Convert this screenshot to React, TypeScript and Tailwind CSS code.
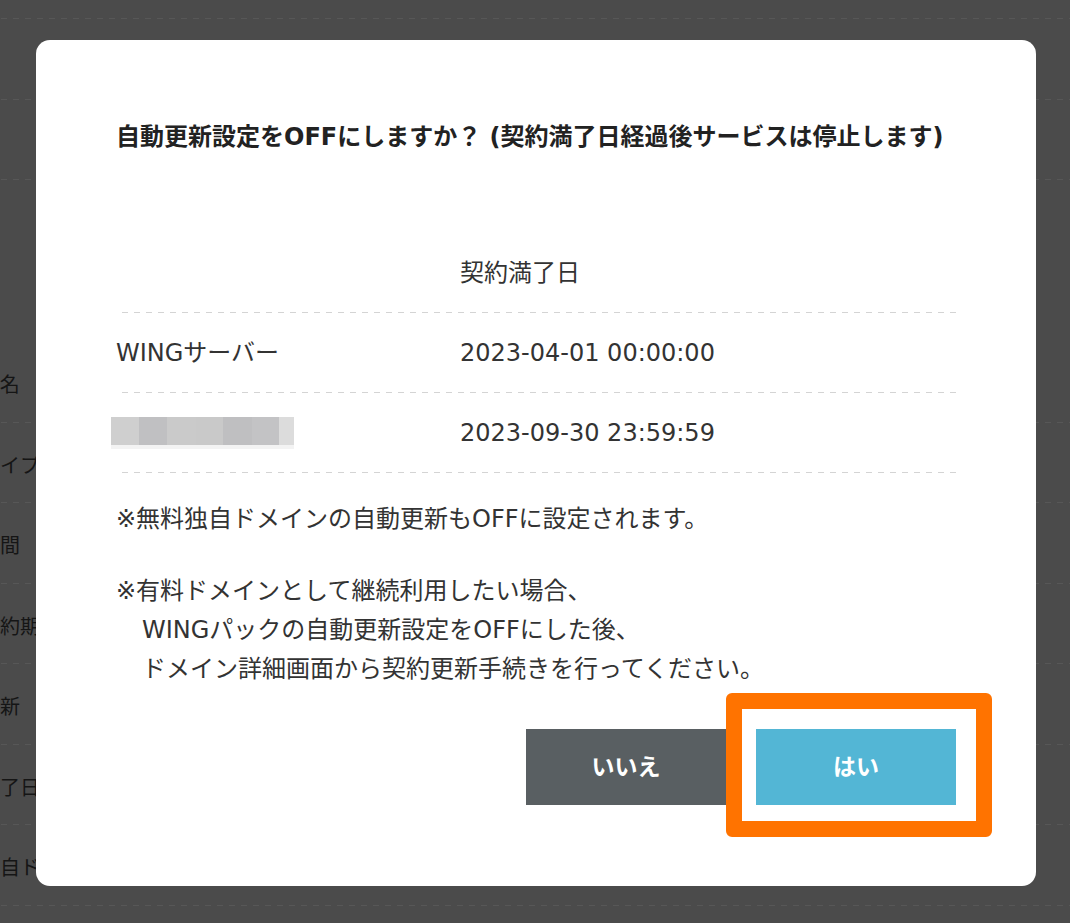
import React from "react";

const dash =
  "bg-[linear-gradient(to_right,#d4d4d4_50%,transparent_50%)] bg-[length:12px_1px] bg-repeat-x bg-bottom";
const bgDash =
  "bg-[linear-gradient(to_right,#575757_50%,transparent_50%)] bg-[length:12px_1px] bg-repeat-x bg-bottom";

const bgRows = [
  { label: "サーバー名", cls: "-ml-[80px]" },
  { label: "契約タイプ", cls: "-ml-[60px]" },
  { label: "利用期間", cls: "-ml-[60px]" },
  { label: "契約期間", cls: "-ml-[20px]" },
  { label: "自動更新", cls: "-ml-[60px]" },
  { label: "契約満了日", cls: "-ml-[60px]" },
  { label: "独自ドメイン", cls: "-ml-[20px]" },
];

const mosaic = [
  { w: "w-[28px]", c: "bg-[#cfcfcf]" },
  { w: "w-[28px]", c: "bg-[#c0c0c2]" },
  { w: "w-[29px]", c: "bg-[#cacaca]" },
  { w: "w-[27px]", c: "bg-[#c9c9c9]" },
  { w: "w-[29px]", c: "bg-[#bfbfc1]" },
  { w: "w-[27px]", c: "bg-[#c3c3c5]" },
  { w: "w-[15px]", c: "bg-[#dcdcdc]" },
];

export default function App() {
  return (
    <div
      className="relative w-full h-[923px] overflow-hidden bg-[#4b4b4b]"
      style={{ fontFamily: '"DejaVu Sans", "Noto Sans CJK JP", sans-serif' }}
    >
      {/* dimmed page behind the dialog */}
      <div className="flex flex-col">
        <div className={`h-[19px] ${bgDash}`} />
        <div className={`h-[81px] ${bgDash}`} />
        <div className={`h-[80px] ${bgDash}`} />
        <div className="h-[162px]" />
        {bgRows.map((r) => (
          <div
            key={r.label}
            className={`h-[80.5px] flex items-center ${bgDash}`}
          >
            <span
              className={`${r.cls} text-[20px] leading-none text-[#151515] whitespace-nowrap pt-[6px]`}
            >
              {r.label}
            </span>
          </div>
        ))}
      </div>

      {/* dialog */}
      <div className="absolute left-[36px] top-[40px] w-[1000px] h-[846px] bg-white rounded-[14px] px-[80px] pt-[80px] flex flex-col">
        <h2 className="text-[24px] leading-[34px] font-bold text-[#222] whitespace-nowrap">
          自動更新設定をOFFにしますか？ (契約満了日経過後サービスは停止します)
        </h2>

        <div className="mt-[79px] flex flex-col text-[24px] text-[#333]">
          <div className={`h-[80px] flex items-center ${dash}`}>
            <div className="w-[344px]" />
            <div>契約満了日</div>
          </div>
          <div className={`h-[80px] flex items-center ${dash}`}>
            <div className="w-[344px]">WINGサーバー</div>
            <div>2023-04-01 00:00:00</div>
          </div>
          <div className={`h-[80px] flex items-center ${dash}`}>
            <div className="w-[344px]">
              <div className="-ml-[5px] flex flex-col">
                <div className="flex h-[28px]">
                  {mosaic.map((m, i) => (
                    <div key={i} className={`${m.w} ${m.c} h-full`} />
                  ))}
                </div>
                <div className="h-[4px] w-[183px] bg-[#f3f3f3]" />
              </div>
            </div>
            <div>2023-09-30 23:59:59</div>
          </div>
        </div>

        <div className="mt-[27px] text-[24px] leading-[39px] text-[#333] whitespace-nowrap">
          <p>※無料独自ドメインの自動更新もOFFに設定されます。</p>
          <div className="mt-[33px]">
            <p>※有料ドメインとして継続利用したい場合、</p>
            <p className="pl-[26px]">WINGパックの自動更新設定をOFFにした後、</p>
            <p className="pl-[26px]">ドメイン詳細画面から契約更新手続きを行ってください。</p>
          </div>
        </div>

        <div className="mt-[40px] flex justify-end gap-[30px]">
          <button className="w-[200px] h-[76px] bg-[#595f62] text-white text-[23px] font-bold">
            いいえ
          </button>
          <div className="relative">
            <button className="w-[200px] h-[76px] bg-[#53b6d5] text-white text-[23px] font-bold">
              はい
            </button>
            <div className="absolute -left-[30px] -top-[36px] -right-[36px] -bottom-[32px] border-[16px] border-[#ff7300] rounded-[6px] pointer-events-none" />
          </div>
        </div>
      </div>
    </div>
  );
}
